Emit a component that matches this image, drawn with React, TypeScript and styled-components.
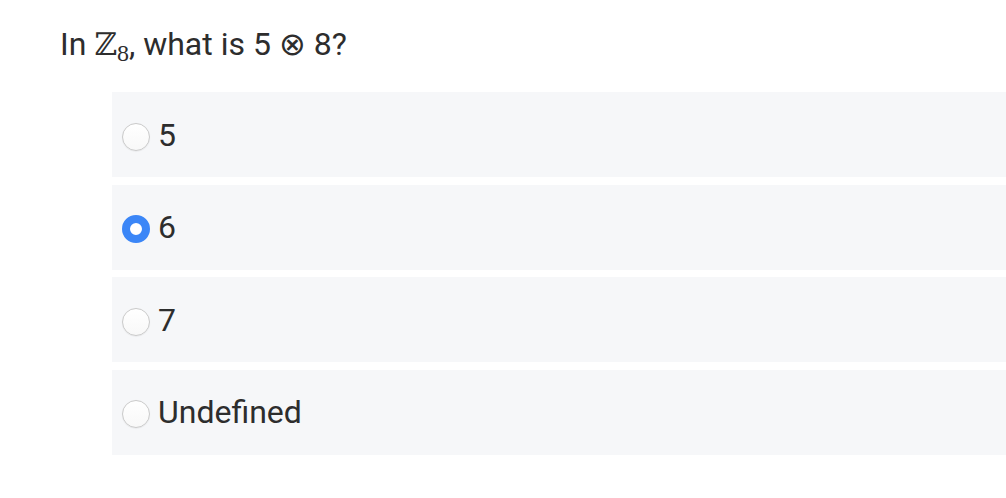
import React, { useState } from "react";
import styled, { createGlobalStyle } from "styled-components";

const Global = createGlobalStyle`
  html, body { margin: 0; padding: 0; background: #ffffff; overflow: hidden; }
  body { font-family: Roboto, "Liberation Sans", sans-serif; color: #2b2b2b; }
`;

const Page = styled.div`
  padding: 21px 0 0 60px;
`;

const Title = styled.h1`
  margin: 0;
  font-family: Roboto, "Liberation Sans", sans-serif;
  font-weight: 400;
  font-size: 32px;
  line-height: 46px;
  color: #2d2d2d;
`;

const MathZ = styled.span`
  font-family: "DejaVu Serif", "Liberation Serif", serif;
  font-size: 31px;
`;

const Sub = styled.sub`
  font-family: "Liberation Serif", "DejaVu Serif", serif;
  font-size: 24px;
  vertical-align: -6px;
  line-height: 0;
`;

const Options = styled.div`
  margin: 25px 0 0 52px;
  display: flex;
  flex-direction: column;
  gap: 7.5px;
`;

const Row = styled.label`
  display: flex;
  align-items: center;
  height: 85px;
  background: #f6f7f9;
  padding-left: 10px;
  gap: 8px;
  cursor: pointer;
`;

const Radio = styled.span<{ $checked: boolean }>`
  box-sizing: border-box;
  width: 28px;
  height: 28px;
  border-radius: 50%;
  margin-top: 4px;
  flex: none;
  ${(p) =>
    p.$checked
      ? `background: #fff; border: 8.5px solid #3b86f7;`
      : `background: linear-gradient(#ffffff, #f8f8f8); border: 1px solid #cacaca; box-shadow: 0 0.5px 1px rgba(0,0,0,0.08);`}
`;

const Label = styled.span`
  font-size: 32px;
  color: #2d2d2d;
  line-height: 1;
`;

const options = ["5", "6", "7", "Undefined"];

export default function App() {
  const [sel, setSel] = useState(1);
  return (
    <Page>
      <Global />
      <Title>
        In <MathZ>ℤ</MathZ>
        <Sub>8</Sub>, what is 5 ⊗ 8?
      </Title>
      <Options>
        {options.map((o, i) => (
          <Row key={o} onClick={() => setSel(i)}>
            <Radio $checked={sel === i} />
            <Label>{o}</Label>
          </Row>
        ))}
      </Options>
    </Page>
  );
}
